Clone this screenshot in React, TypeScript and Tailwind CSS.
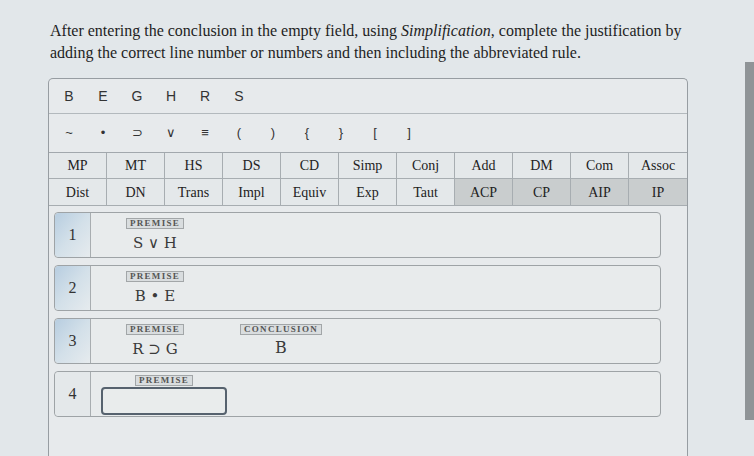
import React from 'react'

const letters = ['B', 'E', 'G', 'H', 'R', 'S']
const symbols = ['~', '•', '⊃', '∨', '≡', '(', ')', '{', '}', '[', ']']
const ruleRows = [
  ['MP', 'MT', 'HS', 'DS', 'CD', 'Simp', 'Conj', 'Add', 'DM', 'Com', 'Assoc'],
  ['Dist', 'DN', 'Trans', 'Impl', 'Equiv', 'Exp', 'Taut', 'ACP', 'CP', 'AIP', 'IP'],
]
const grayRules = ['ACP', 'CP', 'AIP', 'IP']

const serif = { fontFamily: '"Liberation Serif", "Times New Roman", serif' }
const sans = { fontFamily: '"Liberation Sans", Arial, sans-serif' }
const formulaFont = { fontFamily: '"DejaVu Serif", "Liberation Serif", serif' }

function Tag({ text }: { text: string }) {
  return (
    <div
      className="h-[11px] px-[3px] flex items-center border border-[#a2a6a8] bg-[#d9dddf] text-[9px] font-bold tracking-[1.3px] text-[#555] leading-none"
      style={serif}
    >
      {text}
    </div>
  )
}

function LineNumber({ n, tinted }: { n: number; tinted: boolean }) {
  return (
    <div
      className={`w-[36px] shrink-0 flex items-center justify-center border-r border-[#a8adb0] rounded-l-[4px] text-[16px] text-[#333] ${
        tinted ? 'bg-linear-to-br from-[#b7cde0] via-[#d3e0e9] to-[#e6ebee]' : 'bg-[#e4e8ea]'
      }`}
      style={serif}
    >
      {n}
    </div>
  )
}

function ProofLine({
  n,
  formula,
  conclusion,
  tinted = true,
}: {
  n: number
  formula: string
  conclusion?: string
  tinted?: boolean
}) {
  return (
    <div className="w-[607px] h-[46px] flex border border-[#9ea3a6] rounded-[4px] bg-[#e8ebec]">
      <LineNumber n={n} tinted={tinted} />
      <div className="flex pl-[34px] pt-[5px] gap-[52px]">
        <div className="w-[60px] flex flex-col items-center">
          <Tag text="PREMISE" />
          <div className="mt-[4px] text-[15px] text-[#3a3a3a] whitespace-nowrap leading-[20px]" style={formulaFont}>
            {formula}
          </div>
        </div>
        {conclusion && (
          <div className="w-[88px] flex flex-col items-center">
            <Tag text="CONCLUSION" />
            <div className="mt-[3px] text-[16px] text-[#3a3a3a] leading-[20px]" style={formulaFont}>
              {conclusion}
            </div>
          </div>
        )}
      </div>
    </div>
  )
}

function EmptyLine({ n }: { n: number }) {
  return (
    <div className="w-[607px] h-[46px] flex border border-[#9ea3a6] rounded-[4px] bg-[#e8ebec]">
      <LineNumber n={n} tinted={false} />
      <div className="pl-[10px] pt-[3px] flex flex-col items-center w-[136px]">
        <Tag text="PREMISE" />
        <div className="mt-[1px] w-[126px] h-[28px] border-2 border-[#56626e] rounded-[4px] bg-[#e9ecec]" />
      </div>
    </div>
  )
}

export default function App() {
  return (
    <div className="w-[754px] h-[456px] overflow-hidden flex bg-[#e2e7ea]">
      <div className="flex-1 pl-[50px] pt-[20px]">
        <p className="w-[645px] text-[16px] leading-[22px] text-[#1e1e1e]" style={serif}>
          After entering the conclusion in the empty field, using <i>Simplification</i>, complete the justification by
          adding the correct line number or numbers and then including the abbreviated rule.
        </p>

        <div className="mt-[14px] -ml-[2px] w-[640px] h-[400px] border border-b-0 border-[#979da2] rounded-t-[5px] bg-[#e7eaec]">
          {/* variable letters */}
          <div className="h-[35px] flex items-center pl-[3px] border-b border-[#b3b9bd]">
            {letters.map((l) => (
              <div key={l} className="w-[34px] text-center text-[14px] text-[#333]" style={sans}>
                {l}
              </div>
            ))}
          </div>

          {/* operators */}
          <div className="h-[38px] flex items-center pl-[3px]">
            {symbols.map((s) => (
              <div key={s} className="w-[34px] text-center text-[13px] text-[#333]" style={sans}>
                {s}
              </div>
            ))}
          </div>

          {/* rules table */}
          <div className="border-t border-[#a2a8ad]">
            {ruleRows.map((row, ri) => (
              <div key={ri} className={`grid grid-cols-11 h-[26px] ${ri === 0 ? 'border-b border-[#a7adb1]' : ''}`}>
                {row.map((r, ci) => (
                  <div
                    key={r}
                    className={`flex items-center justify-center text-[14px] text-[#222] ${
                      ci < 10 ? 'border-r border-[#a7adb1]' : ''
                    } ${grayRules.includes(r) ? 'bg-[#c9cdce]' : 'bg-[#e4e8ea]'}`}
                    style={serif}
                  >
                    {r}
                  </div>
                ))}
              </div>
            ))}
          </div>

          {/* proof lines */}
          <div className="border-t border-[#a7adb1] pl-[5px] pt-[6px] flex flex-col gap-[7px]">
            <ProofLine n={1} formula="S ∨ H" />
            <ProofLine n={2} formula="B • E" />
            <ProofLine n={3} formula="R ⊃ G" conclusion="B" />
            <EmptyLine n={4} />
          </div>
        </div>
      </div>

      {/* screen edge */}
      <div className="w-[9px] flex flex-col">
        <div className="h-[62px]" />
        <div className="h-[358px] bg-[#8f9497]" />
      </div>
    </div>
  )
}
